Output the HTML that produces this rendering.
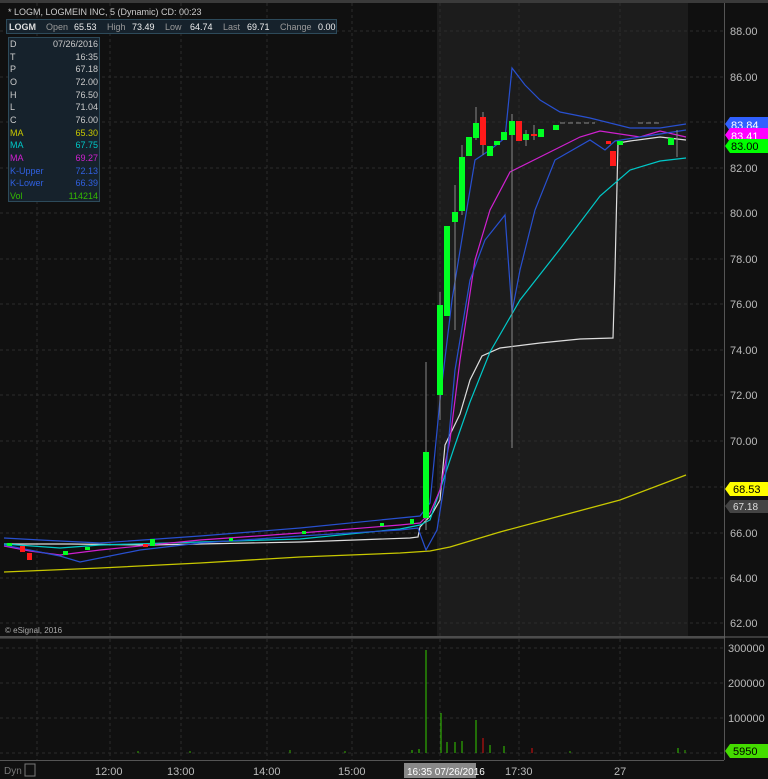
<!DOCTYPE html>
<html><head><style>
body{margin:0;background:#0e0e0e;width:768px;height:779px;overflow:hidden;font-family:"Liberation Sans",sans-serif;}
</style></head><body>
<svg width="768" height="779" xmlns="http://www.w3.org/2000/svg" style="position:absolute;left:0;top:0">
<rect width="768" height="779" fill="#101010"/>
<rect x="0" y="0" width="768" height="3" fill="#3a3a3a"/>
<rect x="437" y="3" width="251" height="634" fill="#1c1c1c"/>
<rect x="437" y="640" width="0" height="0"/>
<!-- grid -->
<g stroke="#2c2c2c" stroke-dasharray="3,3" stroke-width="1">
<line x1="37" y1="3" x2="37" y2="760"/><line x1="110" y1="3" x2="110" y2="760"/><line x1="181" y1="3" x2="181" y2="760"/><line x1="267" y1="3" x2="267" y2="760"/><line x1="352" y1="3" x2="352" y2="760"/><line x1="440" y1="3" x2="440" y2="760"/><line x1="519" y1="3" x2="519" y2="760"/><line x1="620" y1="3" x2="620" y2="760"/>
<line x1="0" y1="31" x2="724" y2="31"/><line x1="0" y1="77" x2="724" y2="77"/><line x1="0" y1="122" x2="724" y2="122"/><line x1="0" y1="168" x2="724" y2="168"/><line x1="0" y1="213" x2="724" y2="213"/><line x1="0" y1="259" x2="724" y2="259"/><line x1="0" y1="304" x2="724" y2="304"/><line x1="0" y1="350" x2="724" y2="350"/><line x1="0" y1="395" x2="724" y2="395"/><line x1="0" y1="441" x2="724" y2="441"/><line x1="0" y1="487" x2="724" y2="487"/><line x1="0" y1="533" x2="724" y2="533"/><line x1="0" y1="578" x2="724" y2="578"/><line x1="0" y1="623" x2="724" y2="623"/>
<line x1="0" y1="648" x2="724" y2="648"/><line x1="0" y1="683" x2="724" y2="683"/><line x1="0" y1="718" x2="724" y2="718"/><line x1="0" y1="753" x2="724" y2="753"/>
</g>
<!-- axis -->
<line x1="724.5" y1="3" x2="724.5" y2="760" stroke="#555"/>
<rect x="0" y="636" width="724" height="3" fill="#333"/>
<line x1="0" y1="637" x2="768" y2="637" stroke="#666"/>
<line x1="0" y1="760.5" x2="724" y2="760.5" stroke="#555"/>
<g fill="#bbb" font-size="11">
<text x="730" y="35">88.00</text><text x="730" y="81">86.00</text><text x="730" y="172">82.00</text><text x="730" y="217">80.00</text><text x="730" y="263">78.00</text><text x="730" y="308">76.00</text><text x="730" y="354">74.00</text><text x="730" y="399">72.00</text><text x="730" y="445">70.00</text><text x="730" y="491">68.00</text><text x="730" y="537">66.00</text><text x="730" y="582">64.00</text><text x="730" y="627">62.00</text>
<text x="728" y="652">300000</text><text x="728" y="687">200000</text><text x="728" y="722">100000</text>
<text x="95" y="775">12:00</text><text x="167" y="775">13:00</text><text x="253" y="775">14:00</text><text x="338" y="775">15:00</text><text x="505" y="775">17:30</text><text x="614" y="775">27</text>
</g>
<rect x="404" y="763" width="72" height="15" fill="#888"/>
<text x="407" y="775" fill="#fff" font-size="10">16:35 07/26/2016</text>
<text x="4" y="774" fill="#777" font-size="10">Dyn</text><rect x="25" y="764" width="10" height="12" fill="none" stroke="#777"/>
<text x="5" y="633" fill="#aaa" font-size="8">© eSignal, 2016</text>
<!-- price tags -->
<path d="M725,489 l5,-7 h38 v14 h-38z" fill="#ffff00"/><text x="733" y="493" font-size="11" fill="#000">68.53</text>
<path d="M725,506 l5,-6 h38 v13 h-38z" fill="#444"/><text x="733" y="510" font-size="10" fill="#ddd">67.18</text>
<path d="M725,124 l5,-7 h38 v14 h-38z" fill="#3060ff"/><text x="731" y="129" font-size="11" fill="#fff">83.84</text>
<path d="M725,135 l5,-7 h38 v14 h-38z" fill="#ff00ff"/><text x="731" y="140" font-size="11" fill="#fff">83.41</text>
<path d="M725,146 l5,-7 h38 v14 h-38z" fill="#00ff00"/><text x="731" y="150" font-size="11" fill="#000">83.00</text>
<path d="M725,751 l5,-7 h38 v14 h-38z" fill="#44dd00"/><text x="733" y="755" font-size="11" fill="#000">5950</text>
<!-- yellow MA -->
<polyline fill="none" stroke="#c8c800" stroke-width="1.3" points="4,572 100,568 200,563 300,557 400,553 430,551 450,547 500,532 560,516 620,500 686,475"/>
<!-- white -->
<polyline fill="none" stroke="#ddd" stroke-width="1.2" points="4,544 70,544 150,545 300,542 410,538 418,537 420,527 432,514 440,500 445,445 460,414 470,380 482,356 500,348 540,343 580,339 613,338 615,270 618,143 630,141 660,137 686,140"/>
<!-- cyan -->
<polyline fill="none" stroke="#00c8c8" stroke-width="1.2" points="4,544 60,548 100,545 200,542 300,539 400,529 420,525 430,520 440,490 455,445 470,402 490,352 520,300 560,249 600,196 630,170 660,161 686,158"/>
<!-- magenta -->
<polyline fill="none" stroke="#d020d0" stroke-width="1.2" points="4,546 30,551 60,555 100,550 200,540 300,533 400,525 420,523 430,513 440,490 450,440 460,360 475,260 490,210 510,172 540,157 580,137 600,131 640,137 660,131 686,137"/>
<!-- blue bands -->
<polyline fill="none" stroke="#2850d0" stroke-width="1.2" points="4,538 40,540 100,543 200,536 300,528 400,518 420,516 430,503 440,400 452,300 465,220 475,160 490,150 505,138 512,68 525,85 540,100 560,112 590,118 630,128 660,128 686,124"/>
<polyline fill="none" stroke="#2850d0" stroke-width="1.2" points="4,545 60,556 80,562 140,550 200,543 300,536 400,530 418,528 426,550 437,530 445,480 455,370 470,280 485,240 505,215 512,312 520,270 535,210 555,160 590,140 605,150 615,141 640,137 660,134 686,130"/>
<!-- candles -->
<g stroke="#888" stroke-width="1">
<line x1="426" y1="362" x2="426" y2="530"/><line x1="440" y1="292" x2="440" y2="420"/><line x1="455" y1="185" x2="455" y2="330"/><line x1="462" y1="145" x2="462" y2="215"/><line x1="476" y1="107" x2="476" y2="140"/><line x1="483" y1="112" x2="483" y2="155"/><line x1="512" y1="114" x2="512" y2="448"/><line x1="526" y1="130" x2="526" y2="146"/><line x1="534" y1="125" x2="534" y2="140"/><line x1="677" y1="130" x2="677" y2="157"/>
</g>
<g fill="#00ff22">
<rect x="423" y="452" width="6" height="66"/><rect x="437" y="305" width="6" height="90"/><rect x="444" y="226" width="6" height="90"/><rect x="452" y="212" width="6" height="10"/><rect x="459" y="157" width="6" height="54"/><rect x="466" y="137" width="6" height="19"/><rect x="473" y="123" width="6" height="15"/><rect x="487" y="146" width="6" height="10"/><rect x="494" y="141" width="6" height="4"/><rect x="501" y="132" width="6" height="8"/><rect x="509" y="121" width="6" height="14"/><rect x="523" y="134" width="6" height="6"/><rect x="538" y="129" width="6" height="8"/><rect x="553" y="125" width="6" height="5"/><rect x="617" y="141" width="6" height="4"/><rect x="668" y="138" width="6" height="7"/>
<rect x="7" y="543" width="5" height="3"/><rect x="63" y="551" width="5" height="4"/><rect x="85" y="547" width="5" height="3"/><rect x="150" y="539" width="5" height="7"/><rect x="229" y="538" width="4" height="3"/><rect x="302" y="531" width="4" height="3"/><rect x="380" y="523" width="4" height="3"/><rect x="410" y="519" width="4" height="5"/>
</g>
<g fill="#ff1a1a">
<rect x="480" y="117" width="6" height="28"/><rect x="516" y="121" width="6" height="20"/><rect x="531" y="134" width="6" height="2"/><rect x="610" y="151" width="6" height="15"/><rect x="606" y="141" width="5" height="3"/>
<rect x="20" y="546" width="5" height="6"/><rect x="27" y="553" width="5" height="7"/><rect x="143" y="544" width="5" height="3"/>
</g>
<g stroke="#888"><line x1="560" y1="123" x2="595" y2="123" stroke-dasharray="5,3"/><line x1="638" y1="123" x2="660" y2="123" stroke-dasharray="5,3"/></g>
<!-- volume -->
<g stroke="#33cc00" stroke-width="1">
<line x1="426" y1="650" x2="426" y2="753"/><line x1="441" y1="713" x2="441" y2="753"/><line x1="447" y1="742" x2="447" y2="753"/><line x1="455" y1="742" x2="455" y2="753"/><line x1="462" y1="741" x2="462" y2="753"/><line x1="476" y1="720" x2="476" y2="753"/><line x1="490" y1="745" x2="490" y2="753"/><line x1="504" y1="746" x2="504" y2="753"/><line x1="419" y1="749" x2="419" y2="753"/><line x1="412" y1="750" x2="412" y2="753"/><line x1="678" y1="748" x2="678" y2="753"/>
</g>
<line x1="483" y1="738" x2="483" y2="753" stroke="#dd1111"/><line x1="532" y1="748" x2="532" y2="753" stroke="#dd1111"/>
<g stroke="#33aa00"><line x1="138" y1="751" x2="138" y2="753"/><line x1="190" y1="751" x2="190" y2="753"/><line x1="290" y1="750" x2="290" y2="753"/><line x1="345" y1="751" x2="345" y2="753"/><line x1="570" y1="751" x2="570" y2="753"/><line x1="685" y1="750" x2="685" y2="753"/></g>
<!-- header -->
<text x="8" y="15" fill="#ccc" font-size="9">* LOGM, LOGMEIN INC, 5 (Dynamic) CD: 00:23</text>
<rect x="6.5" y="19.5" width="330" height="14" fill="#16222c" stroke="#2d4a5a"/>
<g font-size="9"><text x="9" y="30" fill="#ddd" font-weight="bold">LOGM</text><text x="46" y="30" fill="#999">Open</text><text x="74" y="30" fill="#eee">65.53</text><text x="107" y="30" fill="#999">High</text><text x="132" y="30" fill="#eee">73.49</text><text x="165" y="30" fill="#999">Low</text><text x="190" y="30" fill="#eee">64.74</text><text x="223" y="30" fill="#999">Last</text><text x="247" y="30" fill="#eee">69.71</text><text x="280" y="30" fill="#999">Change</text><text x="318" y="30" fill="#eee">0.00</text></g>
<rect x="8.5" y="37.5" width="91" height="164" fill="#16222c" stroke="#2d4a5a"/>
<g font-size="9">
<text x="10" y="47" fill="#ccc">D</text><text x="98" y="47" fill="#ccc" text-anchor="end">07/26/2016</text>
<text x="10" y="60" fill="#ccc">T</text><text x="98" y="60" fill="#ccc" text-anchor="end">16:35</text>
<text x="10" y="72" fill="#ccc">P</text><text x="98" y="72" fill="#ccc" text-anchor="end">67.18</text>
<text x="10" y="85" fill="#ccc">O</text><text x="98" y="85" fill="#ccc" text-anchor="end">72.00</text>
<text x="10" y="98" fill="#ccc">H</text><text x="98" y="98" fill="#ccc" text-anchor="end">76.50</text>
<text x="10" y="110" fill="#ccc">L</text><text x="98" y="110" fill="#ccc" text-anchor="end">71.04</text>
<text x="10" y="123" fill="#ccc">C</text><text x="98" y="123" fill="#ccc" text-anchor="end">76.00</text>
<text x="10" y="136" fill="#c8c800">MA</text><text x="98" y="136" fill="#c8c800" text-anchor="end">65.30</text>
<text x="10" y="148" fill="#00c8c8">MA</text><text x="98" y="148" fill="#00c8c8" text-anchor="end">67.75</text>
<text x="10" y="161" fill="#d020d0">MA</text><text x="98" y="161" fill="#d020d0" text-anchor="end">69.27</text>
<text x="10" y="174" fill="#3060e0">K-Upper</text><text x="98" y="174" fill="#3060e0" text-anchor="end">72.13</text>
<text x="10" y="186" fill="#3060e0">K-Lower</text><text x="98" y="186" fill="#3060e0" text-anchor="end">66.39</text>
<text x="10" y="199" fill="#33bb00">Vol</text><text x="98" y="199" fill="#33bb00" text-anchor="end">114214</text>
</g>
</svg>
</body></html>
